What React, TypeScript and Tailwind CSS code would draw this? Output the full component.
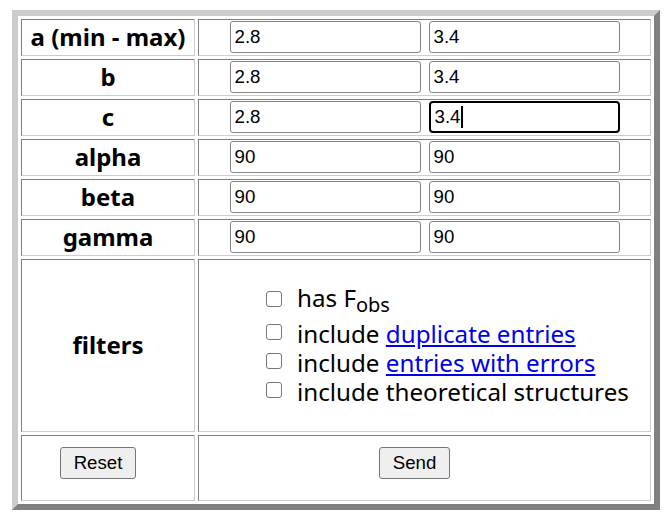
import React from "react";

const cell =
  "border border-t-[#808080] border-l-[#808080] border-r-[#cccccc] border-b-[#cccccc] bg-white";

const labelFont = { fontFamily: '"Noto Sans", "Open Sans", sans-serif' };

function Label({ children }: { children: React.ReactNode }) {
  return (
    <div
      className={`${cell} flex items-center justify-center pb-[2px] font-bold text-[24px] text-black leading-none`}
      style={labelFont}
    >
      {children}
    </div>
  );
}

function InputPair({ a, b, focused }: { a: string; b: string; focused?: boolean }) {
  const base =
    "h-[32px] w-[191px] rounded-[3px] bg-white pl-[4px] text-[18.67px] text-black outline-none font-['Liberation_Sans',Arial,sans-serif]";
  return (
    <div className={`${cell} flex items-start justify-center gap-[8px] pt-[1px]`}>
      <input readOnly value={a} className={`${base} border border-[#858585]`} />
      {focused ? (
        <div className="relative">
          <input
            readOnly
            value={b}
            className={`${base} border-2 border-black rounded-[4px] pl-[3px]`}
          />
          <span className="absolute left-[32px] top-[5px] h-[22px] w-[2px] bg-black" />
        </div>
      ) : (
        <input readOnly value={b} className={`${base} border border-[#858585]`} />
      )}
    </div>
  );
}

function Check() {
  return (
    <span className="mt-[5px] block h-[16px] w-[16px] shrink-0 rounded-[3px] border border-[#767676] bg-white" />
  );
}

export default function App() {
  const rows: [string, string, string, boolean?][] = [
    ["a (min - max)", "2.8", "3.4"],
    ["b", "2.8", "3.4"],
    ["c", "2.8", "3.4", true],
    ["alpha", "90", "90"],
    ["beta", "90", "90"],
    ["gamma", "90", "90"],
  ];
  const btn =
    "h-[32px] rounded-[3px] border border-[#767676] bg-[#efefef] text-[18.67px] text-black font-['Liberation_Sans',Arial,sans-serif]";
  return (
    <div className="min-h-[517px] bg-white pt-[10px] pl-[12px]">
      <div className="w-[648px] h-[500px] border-[6px] border-t-[#cccccc] border-l-[#cccccc] border-r-[#808080] border-b-[#808080] bg-white">
        <div className="grid grid-cols-[174px_453px] grid-rows-[37px_37px_37px_37px_37px_37px_173px_66px] gap-[3px] p-[3px]">
          {rows.map(([l, a, b, f]) => (
            <React.Fragment key={l}>
              <Label>{l}</Label>
              <InputPair a={a} b={b} focused={f} />
            </React.Fragment>
          ))}
          <Label>filters</Label>
          <div
            className={`${cell} flex flex-col justify-center pl-[67px] text-[24.2px] text-black`}
            style={labelFont}
          >
            <div className="flex h-[33px] items-start">
              <Check />
              <span className="relative -top-[3px] ml-[15px] block h-[29px] leading-[29px]">
                has F<span className="relative top-[5px] text-[20px]">obs</span>
              </span>
            </div>
            <div className="flex h-[29px] items-start">
              <Check />
              <span className="ml-[15px] block h-[29px] leading-[29px]">
                include{" "}
                <a href="#" className="inline-block leading-[29px] text-[#0000ee] underline">duplicate entries</a>
              </span>
            </div>
            <div className="flex h-[29px] items-start">
              <Check />
              <span className="ml-[15px] block h-[29px] leading-[29px]">
                include{" "}
                <a href="#" className="inline-block leading-[29px] text-[#0000ee] underline">entries with errors</a>
              </span>
            </div>
            <div className="flex h-[29px] items-start">
              <Check />
              <span className="ml-[15px] block h-[29px] leading-[29px]">include theoretical structures</span>
            </div>
          </div>
          <div className={`${cell} flex justify-center pt-[11px] pr-[20px]`}>
            <button className={`${btn} w-[76px]`}>Reset</button>
          </div>
          <div className={`${cell} flex justify-center pt-[11px] pr-[20px]`}>
            <button className={`${btn} w-[71px]`}>Send</button>
          </div>
        </div>
      </div>
    </div>
  );
}
